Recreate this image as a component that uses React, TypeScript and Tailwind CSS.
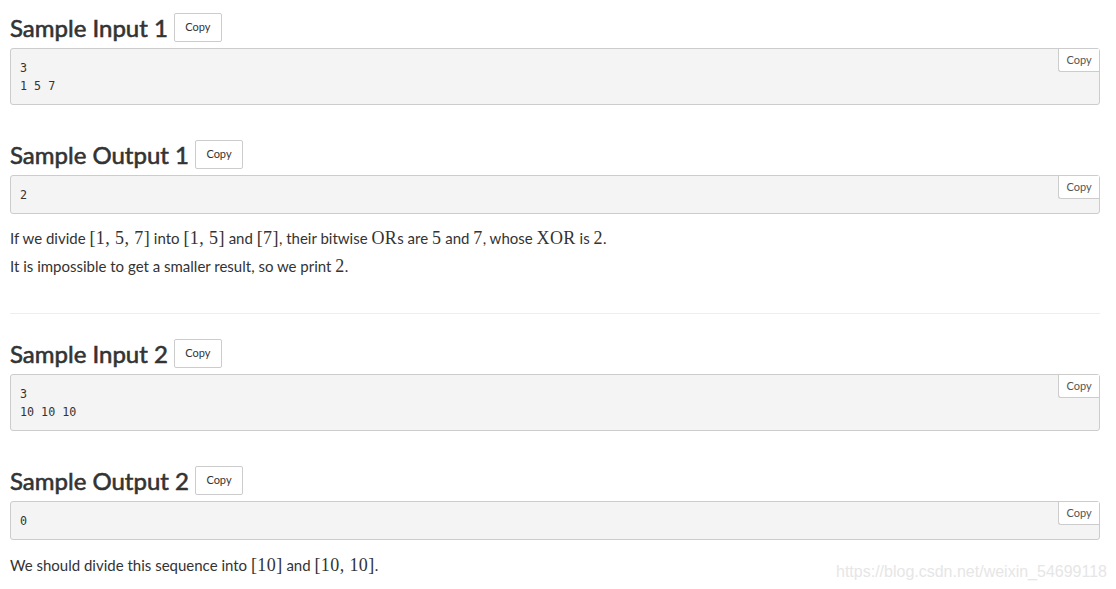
import React from "react";

const M = ({ children }: { children: React.ReactNode }) => (
  <span className="font-['Liberation_Serif',serif] text-[18px] leading-none tracking-[0.4px]">{children}</span>
);

function Heading({ title }: { title: string }) {
  return (
    <div className="flex items-center gap-[6px] h-[29px]">
      <h3 className="font-['Lato',sans-serif] font-normal text-[24px] leading-none text-[#333] tracking-[0px] [-webkit-text-stroke:0.6px_#333]">{title}</h3>
      <button className="h-[29px] w-[48px] border border-[#ccc] bg-white text-[11px] font-['Lato',sans-serif] text-[#333] rounded-[2px]">
        Copy
      </button>
    </div>
  );
}

function Pre({ lines }: { lines: string[] }) {
  return (
    <div className="relative mt-[6px] bg-[#f4f4f4] border border-[#ccc] rounded-[3px] px-[9px] pt-[10px] pb-[9px] font-['DejaVu_Sans_Mono',monospace] text-[11.7px] leading-[18px] text-[#333]">
      {lines.map((l, i) => (
        <div key={i} className="whitespace-pre">{l}</div>
      ))}
      <button className="absolute top-0 right-0 h-[23px] w-[41px] bg-white border-l border-b border-[#ccc] rounded-bl-[3px] text-[11px] font-['Lato',sans-serif] text-[#555]">
        Copy
      </button>
    </div>
  );
}

export default function App() {
  return (
    <div className="relative w-[1116px] h-[589px] bg-white overflow-hidden font-['Lato',sans-serif] text-[#333]">
      <div className="pl-[10px] pr-[16px] pt-[13px]">
        <Heading title="Sample Input 1" />
        <Pre lines={["3", "1 5 7"]} />

        <div className="mt-[35px]">
          <Heading title="Sample Output 1" />
          <Pre lines={["2"]} />
        </div>

        <div className="mt-[11px] text-[15px] leading-[27px]">
          <p>
            If we divide <M>[1, 5, 7]</M> into <M>[1, 5]</M> and <M>[7]</M>, their bitwise <M>OR</M>s are <M>5</M> and <M>7</M>, whose <M>XOR</M> is <M>2</M>.
          </p>
          <p className="mt-[1px]">
            It is impossible to get a smaller result, so we print <M>2</M>.
          </p>
        </div>

        <div className="mt-[33px] border-t border-[#eee]" />

        <div className="mt-[25px]">
          <Heading title="Sample Input 2" />
          <Pre lines={["3", "10 10 10"]} />
        </div>

        <div className="mt-[35px]">
          <Heading title="Sample Output 2" />
          <Pre lines={["0"]} />
        </div>

        <div className="mt-[12px] text-[15px] leading-[27px]">
          <p>
            We should divide this sequence into <M>[10]</M> and <M>[10, 10]</M>.
          </p>
        </div>
      </div>
      <div className="absolute left-[836px] top-[560px] font-['Liberation_Sans',sans-serif] text-[16px] text-[#e6e6e6]">
        https://blog.csdn.net/weixin_54699118
      </div>
    </div>
  );
}
